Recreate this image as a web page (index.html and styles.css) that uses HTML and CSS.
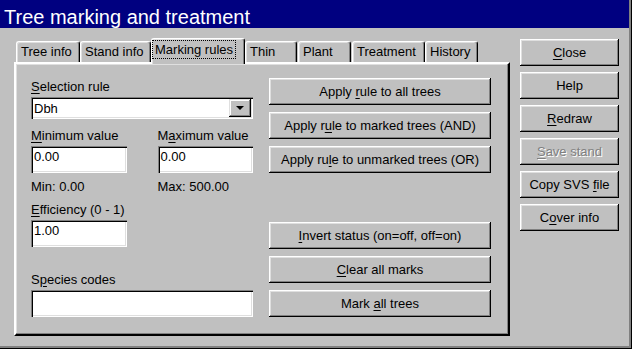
FILE: index.html
```html
<!DOCTYPE html>
<html>
	<head>
		<meta charset="utf-8">
		<title>Tree marking and treatment</title>
		<link rel="stylesheet" href="styles.css">
	</head>
	<body>
	<div class="window">
		<div class="title">Tree marking and treatment</div>
		<div class="main">
			<!--tabs-->
			<div class="tabs">
				<ul class="strip">
					<li class="tab t1">Tree info</li>
					<li class="tab t2">Stand info</li>
					<li class="tab on t3"><span class="focus">Marking rules</span></li>
					<li class="tab t4">Thin</li>
					<li class="tab t5">Plant</li>
					<li class="tab t6">Treatment</li>
					<li class="tab t7">History</li>
				</ul>
				<div class="panel">
					<!--left-->
					<div class="left">
						<div class="lbl first"><u>S</u>election rule</div>
						<div class="select"><span class="val">Dbh</span><span class="arrow"><i></i></span></div>
						<div class="pair">
							<div class="col">
								<div class="lbl gap9"><u>M</u>inimum value</div>
								<div class="edit">0.00</div>
								<div class="lbl gap6">Min: 0.00</div>
							</div>
							<div class="col">
								<div class="lbl gap9">M<u>a</u>ximum value</div>
								<div class="edit">0.00</div>
								<div class="lbl gap6">Max: 500.00</div>
							</div>
						</div>
						<div class="lbl gap7"><u>E</u>fficiency (0 - 1)</div>
						<div class="edit short">1.00</div>
						<div class="lbl gap25">S<u>p</u>ecies codes</div>
						<div class="edit"></div>
					</div>
					<!--middle-->
					<div class="mid">
						<div class="btn">Apply <u>r</u>ule to all trees</div>
						<div class="btn">Apply r<u>u</u>le to marked trees (AND)</div>
						<div class="btn">Apply ru<u>l</u>e to unmarked trees (OR)</div>
						<div class="btn sep"><u>I</u>nvert status (on=off, off=on)</div>
						<div class="btn"><u>C</u>lear all marks</div>
						<div class="btn">Mark <u>a</u>ll trees</div>
					</div>
				</div>
			</div>
			<!--right-->
			<div class="side">
				<div class="btn"><u>C</u>lose</div>
				<div class="btn">Help</div>
				<div class="btn"><u>R</u>edraw</div>
				<div class="btn off"><u>S</u>ave stand</div>
				<div class="btn">Copy SVS <u>f</u>ile</div>
				<div class="btn">C<u>o</u>ver info</div>
			</div>
		</div>
	</div>
	</body>
</html>
```
FILE: styles.css
```css
*{margin:0;padding:0;box-sizing:border-box;list-style:none;}
body{background:#c0c0c0;width:632px;height:349px;overflow:hidden;font:13px "Liberation Sans",Arial,sans-serif;color:#000;}
u{text-decoration:underline;text-underline-offset:2px;}
.window{width:632px;height:349px;box-shadow:inset -1px -1px #000,inset -3px -3px #808080;}
.title{height:28px;padding:4px 0 0 4px;line-height:26px;font-size:20px;color:#fff;background:#000080;margin-right:3px;}
.main{display:flex;padding:10px 0 0 14px;}
/*tabs*/
.tabs{width:496px;}
.strip{display:flex;align-items:flex-end;height:24px;padding-left:2px;}
.tab{height:21px;padding:2px 0 0 4px;line-height:16px;border:1px solid;border-bottom:0;border-color:#fff #000 #fff #fff;border-radius:3px 3px 0 0;box-shadow:inset -1px 0 #808080,inset 1px 1px #dfdfdf;background:#c0c0c0;}
.tab.on{height:26px;margin-bottom:-2px;position:relative;z-index:1;padding:2px 0 0 1px;}
.focus{display:inline-block;outline:1px dotted #000;padding:0 2px;line-height:17px;}
.t1{width:64px;}
.t2{width:71px;}
.t3{width:94px;}
.t4{width:52px;margin-right:1px;}
.t5{width:53px;margin-right:1px;}
.t6{width:73px;}
.t7{width:53px;}
.panel{display:flex;height:274px;padding-left:15px;border:2px solid;border-color:#fff #000 #000 #fff;box-shadow:inset -1px -1px #808080,inset 1px 1px #dfdfdf;}
/*left*/
.left{width:222px;display:flex;flex-direction:column;}
.lbl{line-height:16px;}
.first{margin-top:15px;}
.gap9{margin-top:9px;}
.gap6{margin-top:6px;}
.gap7{margin-top:7px;}
.gap25{margin-top:25px;}
.select{display:flex;height:22px;margin-top:2px;background:#fff;box-shadow:inset 1px 1px #808080,inset 2px 2px #000,inset -1px -1px #fff,inset -2px -2px #dfdfdf;}
.select .val{flex:1;padding:3px 0 0 3px;line-height:17px;}
.select .arrow{display:flex;align-items:center;justify-content:center;width:22px;height:18px;margin:2px 2px 0 0;background:#c0c0c0;box-shadow:inset -1px -1px #000,inset 1px 1px #dfdfdf,inset -2px -2px #808080,inset 2px 2px #fff;}
.select .arrow i{width:0;height:0;border-left:4px solid transparent;border-right:4px solid transparent;border-top:4px solid #000;}
.pair{display:flex;gap:31px;}
.pair .col{width:96px;}
.edit{height:27px;margin-top:2px;padding:3px 0 0 3px;line-height:16px;background:#fff;box-shadow:inset 1px 1px #808080,inset 2px 2px #000,inset -1px -1px #fff,inset -2px -2px #dfdfdf;}
.short{width:96px;}
/*buttons*/
.btn{height:27px;line-height:27px;text-align:center;white-space:nowrap;background:#c0c0c0;box-shadow:inset -1px -1px #000,inset 1px 1px #fff,inset -2px -2px #808080,inset 2px 2px #dfdfdf;}
.btn.off{color:#808080;text-shadow:1px 1px #fff;}
.mid{width:222px;margin-left:16px;padding-top:14px;display:flex;flex-direction:column;gap:7px;}
.mid .sep{margin-top:42px;}
.side{width:99px;margin-left:10px;padding-top:1px;display:flex;flex-direction:column;gap:6px;}
```
